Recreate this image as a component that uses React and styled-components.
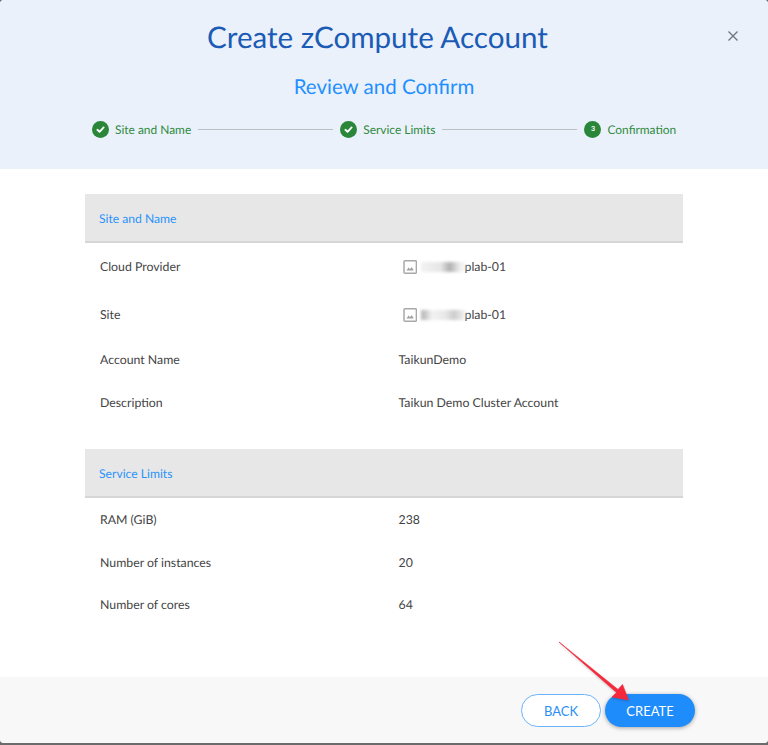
import React from "react";
import styled, { createGlobalStyle } from "styled-components";

const Global = createGlobalStyle`
  html, body { margin: 0; padding: 0; background: #6b6b6b; }
  body { font-family: Lato, "Open Sans", sans-serif; text-rendering: geometricPrecision; }
  * { box-sizing: border-box; }
`;

const Modal = styled.div`
  position: relative;
  width: 768px;
  height: 743px;
  background: #fff;
  border-radius: 4px;
  overflow: hidden;
  display: flex;
  flex-direction: column;
`;

const Header = styled.header`
  position: relative;
  height: 169px;
  flex: none;
  background: #eaf1fb;
  display: flex;
  flex-direction: column;
  align-items: center;
  padding-top: 17px;
`;

const Title = styled.h1`
  margin: 0 13px 0 0;
  height: 42px;
  font-size: 29.6px;
  line-height: 42px;
  font-weight: 400;
  color: #1b5bb5;
`;

const Subtitle = styled.h2`
  margin: 13px 0 0;
  height: 30px;
  font-size: 20.5px;
  line-height: 30px;
  font-weight: 400;
  color: #1f8fff;
`;

const CloseButton = styled.button`
  position: absolute;
  top: 29px;
  right: 28px;
  width: 14px;
  height: 14px;
  padding: 0;
  border: 0;
  background: none;
  display: flex;
`;

const Stepper = styled.div`
  width: 768px;
  margin-top: 17px;
  padding-left: 92px;
  display: flex;
  align-items: center;
  height: 20px;
`;

const StepBadge = styled.span`
  width: 17px;
  height: 17px;
  border-radius: 50%;
  background: #2a873a;
  color: #fff;
  font-size: 7px;
  font-weight: 700;
  flex: none;
  display: flex;
  align-items: center;
  justify-content: center;
`;

const StepLabel = styled.span`
  margin-left: 6px;
  font-size: 11.95px;
  color: #2f8a3e;
  white-space: nowrap;
`;

const StepLine = styled.span`
  width: ${(p) => p.$w}px;
  height: 1px;
  margin: 0 7px;
  background: #bcbfc4;
  flex: none;
`;

const Body = styled.main`
  flex: 1;
  padding: 25px 85px 0;
  display: flex;
  flex-direction: column;
`;

const SectionHeader = styled.div`
  height: 49px;
  background: #e7e7e7;
  border-bottom: 2px solid #d6d6d6;
  padding: 1px 0 0 14px;
  display: flex;
  align-items: center;
  font-size: 12.15px;
  color: #2a93fb;
`;

const Section = styled.section`
  margin-bottom: ${(p) => p.$gap}px;
`;

const Row = styled.div`
  height: ${(p) => p.$h}px;
  display: flex;
  align-items: center;
  padding: 0 0 1px 15px;
  font-size: 12.3px;
  color: #444;
`;

const Label = styled.span`
  width: 298.5px;
  flex: none;
`;

const Value = styled.span`
  display: flex;
  align-items: center;
`;

const ImageIcon = styled.svg`
  width: 14px;
  height: 14px;
  margin: 0 4px 0 4px;
  flex: none;
`;

const Redacted = styled.span`
  display: inline-block;
  width: ${(p) => p.$w}px;
  height: 10px;
  background: ${(p) => p.$bg};
  filter: blur(1.5px);
`;

const Footer = styled.footer`
  height: 66px;
  flex: none;
  background: #f8f8f8;
  display: flex;
  align-items: center;
  justify-content: flex-end;
  gap: 4px;
  padding: 1px 73px 0 0;
`;

const BackButton = styled.button`
  width: 80px;
  height: 33px;
  border-radius: 17px;
  border: 1px solid #6db3fb;
  background: #fff;
  color: #2a8ff5;
  font: 400 13px Lato, sans-serif;
`;

const CreateButton = styled.button`
  width: 90px;
  height: 33px;
  border-radius: 17px;
  border: 0;
  background: #1f8cfb;
  color: #fff;
  font: 400 13px Lato, sans-serif;
  box-shadow: 0 1px 4px rgba(0, 0, 0, 0.35);
`;

const Arrow = styled.svg`
  position: absolute;
  left: 550px;
  top: 635px;
  width: 90px;
  height: 75px;
  filter: drop-shadow(0 1px 1px rgba(0, 0, 0, 0.2));
`;

const Check = () => (
  <svg width="11" height="11" viewBox="0 0 12 12" fill="none" stroke="#fff" strokeWidth="2" strokeLinecap="round" strokeLinejoin="round">
    <path d="M2.6 6.3 5 8.6 9.4 3.8" />
  </svg>
);

const Img = () => (
  <ImageIcon viewBox="0 0 14 14" fill="none">
    <rect x="1" y="0.8" width="12.4" height="12.4" rx="1" stroke="#a8a8a8" strokeWidth="1.5" />
    <path d="M3.5 10.5 5.5 7.5 7 9.2 8.7 7 10.8 10.5Z" fill="#a0a0a0" />
  </ImageIcon>
);

const Blurred = ({ a, b }) => (
  <Value>
    <Img />
    <Redacted $w={a} $bg={b} />
    plab-01
  </Value>
);

export default function App() {
  return (
    <>
      <Global />
      <Modal>
        <Header>
          <Title>Create zCompute Account</Title>
          <Subtitle>Review and Confirm</Subtitle>
          <Stepper>
            <StepBadge><Check /></StepBadge>
            <StepLabel>Site and Name</StepLabel>
            <StepLine $w={135} />
            <StepBadge><Check /></StepBadge>
            <StepLabel>Service Limits</StepLabel>
            <StepLine $w={135} />
            <StepBadge>3</StepBadge>
            <StepLabel>Confirmation</StepLabel>
          </Stepper>
          <CloseButton aria-label="Close">
            <svg width="14" height="14" viewBox="0 0 14 14" stroke="#6f7780" strokeWidth="1.4" fill="none">
              <path d="M2.5 2.5 11.5 11.5M11.5 2.5 2.5 11.5" />
            </svg>
          </CloseButton>
        </Header>
        <Body>
          <Section $gap={24}>
            <SectionHeader>Site and Name</SectionHeader>
            <Row $h={48}><Label>Cloud Provider</Label><Blurred a={44} b="linear-gradient(90deg,#f2f2f2,#e6e6e6 45%,#b0b0b0 65%,#f2f2f2 90%)" /></Row>
            <Row $h={48}><Label>Site</Label><Blurred a={44} b="linear-gradient(90deg,#bbb 5%,#f2f2f2 25%,#e8e8e8 55%,#cccccc 75%,#f2f2f2)" /></Row>
            <Row $h={42}><Label>Account Name</Label><Value>TaikunDemo</Value></Row>
            <Row $h={44}><Label>Description</Label><Value>Taikun Demo Cluster Account</Value></Row>
          </Section>
          <Section $gap={0}>
            <SectionHeader>Service Limits</SectionHeader>
            <Row $h={44}><Label>RAM (GiB)</Label><Value>238</Value></Row>
            <Row $h={41}><Label>Number of instances</Label><Value>20</Value></Row>
            <Row $h={44}><Label>Number of cores</Label><Value>64</Value></Row>
          </Section>
        </Body>
        <Footer>
          <BackButton>BACK</BackButton>
          <CreateButton>CREATE</CreateButton>
        </Footer>
        <Arrow viewBox="0 0 90 75">
          <path d="M9 7 66.5 57.5 62 62 78.5 65 72.5 49.5 68 54.5Z" fill="#f5283c" stroke="#f5283c" strokeWidth="0.6" strokeLinejoin="round" />
        </Arrow>
      </Modal>
    </>
  );
}
